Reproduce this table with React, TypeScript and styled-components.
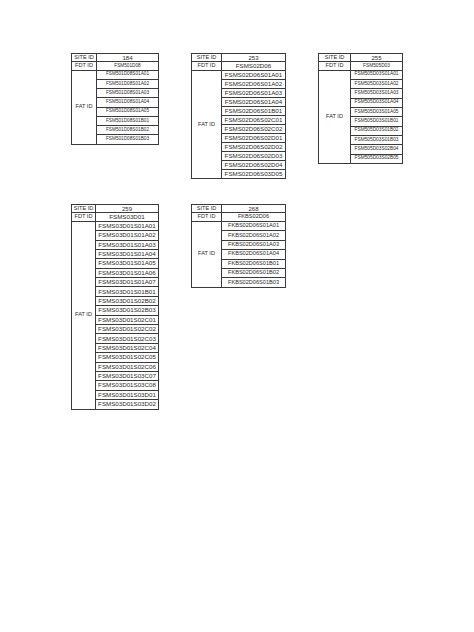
import React from 'react';
import styled, { createGlobalStyle } from 'styled-components';

type SiteTable = {
	site: string;
	fdt: string;
	fats: string[];
	width: number;
	label: number;
	rowHeight: number;
	valueSize: number;
};

const seq = (prefix: string, codes: string[]) => codes.map((c) => prefix + c);

const row1: SiteTable[] = [
	{
		site: '184',
		fdt: 'FSM501D08',
		fats: seq('FSM501D08S01', ['A01', 'A02', 'A03', 'A04', 'A05', 'B01', 'B02', 'B03']),
		width: 88,
		label: 25,
		rowHeight: 9.25,
		valueSize: 4.7,
	},
	{
		site: '253',
		fdt: 'FSMS02D06',
		fats: seq('FSMS02D06', [
			'S01A01',
			'S01A02',
			'S01A03',
			'S01A04',
			'S01B01',
			'S02C01',
			'S02C02',
			'S02D01',
			'S02D02',
			'S02D03',
			'S02D04',
			'S03D05',
		]),
		width: 95,
		label: 30,
		rowHeight: 9.05,
		valueSize: 6.2,
	},
	{
		site: '255',
		fdt: 'FSM505D03',
		fats: seq('FSM505D03', [
			'S01A01',
			'S01A02',
			'S01A03',
			'S01A04',
			'S01A05',
			'S01B01',
			'S01B02',
			'S01B03',
			'S02B04',
			'S02B05',
		]),
		width: 85,
		label: 32,
		rowHeight: 9.35,
		valueSize: 4.8,
	},
];

const row2: SiteTable[] = [
	{
		site: '259',
		fdt: 'FSMS03D01',
		fats: seq('FSMS03D01', [
			'S01A01',
			'S01A02',
			'S01A03',
			'S01A04',
			'S01A05',
			'S01A06',
			'S01A07',
			'S01B01',
			'S02B02',
			'S02B03',
			'S02C01',
			'S02C02',
			'S02C03',
			'S02C04',
			'S02C05',
			'S02C06',
			'S03C07',
			'S03C08',
			'S03D01',
			'S03D02',
		]),
		width: 88,
		label: 24,
		rowHeight: 9.4,
		valueSize: 6.2,
	},
	{
		site: '268',
		fdt: 'FKBS02D06',
		fats: seq('FKBS02D06S01', ['A01', 'A02', 'A03', 'A04', 'B01', 'B02', 'B03']),
		width: 95,
		label: 30,
		rowHeight: 9.45,
		valueSize: 5.6,
	},
];

const SiteGrid = ({ t }: { t: SiteTable }) => (
	<Grid $width={t.width} $label={t.label} $rows={t.fats.length} $rowHeight={t.rowHeight}>
		<Label>SITE ID</Label>
		<Value $size={6}>{t.site}</Value>
		<Label>FDT ID</Label>
		<Value $size={t.valueSize}>{t.fdt}</Value>
		<Label $span={t.fats.length}>FAT ID</Label>
		{t.fats.map((f) => (
			<Value key={f} $size={t.valueSize}>
				{f}
			</Value>
		))}
	</Grid>
);

const App = () => (
	<>
		<GlobalStyle />
		<Page>
			<Row>
				{row1.map((t) => (
					<SiteGrid key={t.site} t={t} />
				))}
			</Row>
			<Row>
				{row2.map((t) => (
					<SiteGrid key={t.site} t={t} />
				))}
			</Row>
		</Page>
	</>
);

const GlobalStyle = createGlobalStyle`
	html, body {
		margin: 0;
		padding: 0;
		background: #fff;
	}
	body {
		font-family: 'Liberation Sans', Arial, sans-serif;
		color: #2a2a2a;
	}
`;

const Page = styled.div`
	width: 474px;
	height: 632px;
	box-sizing: border-box;
	padding: 53px 0 0 71px;
	display: flex;
	flex-direction: column;
	gap: 25px;
`;

const Row = styled.div`
	display: flex;
	align-items: flex-start;
	gap: 32px;
`;

const Grid = styled.div<{ $width: number; $label: number; $rows: number; $rowHeight: number }>`
	display: grid;
	width: ${(p) => p.$width}px;
	grid-template-columns: ${(p) => p.$label}px 1fr;
	grid-template-rows: 8.3px 8.3px repeat(${(p) => p.$rows}, ${(p) => p.$rowHeight}px);
	border-top: 1px solid #3a3a3a;
	border-left: 1px solid #3a3a3a;
	box-sizing: border-box;
`;

const Cell = styled.div`
	display: flex;
	align-items: center;
	justify-content: center;
	border-right: 1px solid #3a3a3a;
	border-bottom: 1px solid #3a3a3a;
	white-space: nowrap;
	overflow: hidden;
	line-height: 1;
`;

const Label = styled(Cell)<{ $span?: number }>`
	font-size: 5.6px;
	${(p) => p.$span && `grid-row: span ${p.$span};`}
`;

const Value = styled(Cell)<{ $size: number }>`
	font-size: ${(p) => p.$size}px;
`;

export default App;
